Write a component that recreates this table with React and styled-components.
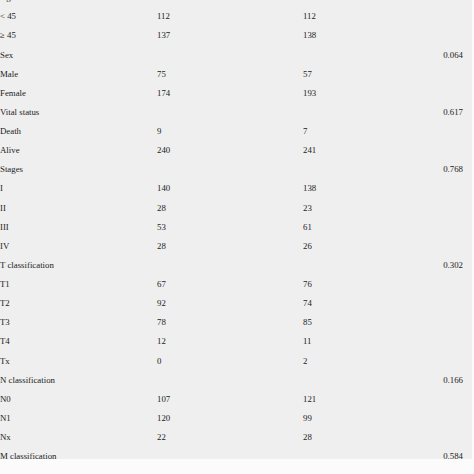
import React from 'react'
import styled, { createGlobalStyle } from 'styled-components'

const GlobalStyle = createGlobalStyle`
  html, body {
    margin: 0;
    padding: 0;
    background: #fbfbfb;
    overflow: hidden;
  }
`

const Sheet = styled.div`
  width: 472px;
  height: 471px;
  background: #efefef;
  overflow: visible;
  font-family: 'Liberation Serif', 'Times New Roman', serif;
  font-size: 8.8px;
  color: #222;
`

const Table = styled.div`
  display: grid;
  grid-template-columns: 157px 146px 1fr auto;
  grid-auto-rows: 19.14px;
  align-items: center;
  margin-top: -12px;
  padding-right: 9px;
`

const Cell = styled.div`
  line-height: 1;
  white-space: nowrap;
  text-align: ${props => (props.$right ? 'right' : 'left')};
`

const rows = [
  ['Age', '', '', ''],
  ['< 45', '112', '112', ''],
  ['≥ 45', '137', '138', ''],
  ['Sex', '', '', '0.064'],
  ['Male', '75', '57', ''],
  ['Female', '174', '193', ''],
  ['Vital status', '', '', '0.617'],
  ['Death', '9', '7', ''],
  ['Alive', '240', '241', ''],
  ['Stages', '', '', '0.768'],
  ['I', '140', '138', ''],
  ['II', '28', '23', ''],
  ['III', '53', '61', ''],
  ['IV', '28', '26', ''],
  ['T classification', '', '', '0.302'],
  ['T1', '67', '76', ''],
  ['T2', '92', '74', ''],
  ['T3', '78', '85', ''],
  ['T4', '12', '11', ''],
  ['Tx', '0', '2', ''],
  ['N classification', '', '', '0.166'],
  ['N0', '107', '121', ''],
  ['N1', '120', '99', ''],
  ['Nx', '22', '28', ''],
  ['M classification', '', '', '0.584'],
  ['M0', '241', '243', ''],
]

export default function App() {
  return (
    <>
      <GlobalStyle />
      <Sheet>
        <Table>
          {rows.map((r, i) => (
            <React.Fragment key={i}>
              <Cell>{r[0]}</Cell>
              <Cell>{r[1]}</Cell>
              <Cell>{r[2]}</Cell>
              <Cell $right>{r[3]}</Cell>
            </React.Fragment>
          ))}
        </Table>
      </Sheet>
    </>
  )
}
